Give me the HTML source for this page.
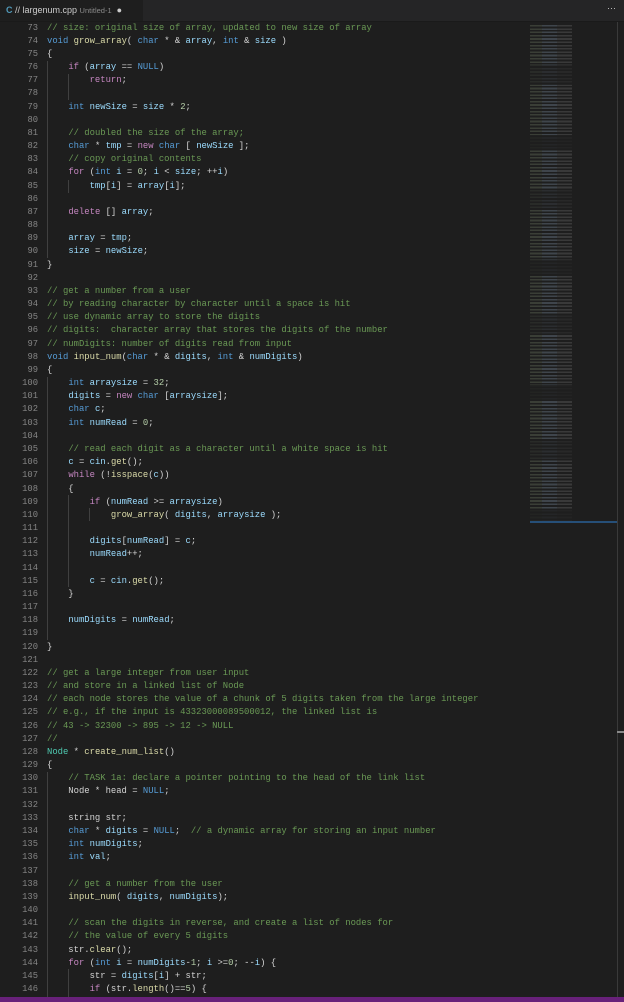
<!DOCTYPE html>
<html><head><meta charset="utf-8"><style>
*{margin:0;padding:0}
body{width:624px;height:1002px;background:#1e1e1e;overflow:hidden;position:relative;font-family:"Liberation Sans",sans-serif}
.title{position:absolute;left:0;top:0;width:624px;height:21px;background:#252526;border-bottom:1px solid #1a1a1a}
.tab{position:absolute;left:0;top:0;height:21px;width:143px;background:#1e1e1e;color:#ccc;font-size:9px;line-height:21px;padding-left:6px;box-sizing:border-box}
.tab .ic{color:#519aba;font-weight:bold}
.tab .u{color:#8a8a8a;font-size:7.5px}
.dots{position:absolute;right:8px;top:3px;color:#ccc;font-size:9px}
.nums{position:absolute;left:0;top:21.5px;width:38px;text-align:right;color:#858585;font-family:"Liberation Mono",monospace;font-size:8.8px;line-height:13.17px;white-space:pre}
pre{position:absolute;left:47px;top:21.5px;color:#d4d4d4;font-family:"Liberation Mono",monospace;font-size:8.88px;line-height:13.17px;letter-spacing:0}
.c{color:#6a9955}.k{color:#569cd6}.p{color:#c586c0}.f{color:#dcdcaa}.v{color:#9cdcfe}.n{color:#b5cea8}.t{color:#4ec9b0}
.status{position:absolute;left:0;bottom:0;width:624px;height:5px;background:#68217a}
.mm{position:absolute;left:530px;top:25px;width:60px;height:497px;opacity:.3;
background:
repeating-linear-gradient(180deg,transparent 0 1.6px,#1e1e1e 1.6px 3.3px),
linear-gradient(90deg,#7a8a70 0 20%,#8ca0b8 20% 45%,#777 45% 70%,transparent 70%);
-webkit-mask:repeating-linear-gradient(180deg,#000 0 40px,rgba(0,0,0,.4) 40px 60px,#000 60px 110px,rgba(0,0,0,.2) 110px 125px)}
.mmhl{position:absolute;left:530px;top:521px;width:87px;height:2px;background:#264f78}
.sb{position:absolute;left:617px;top:22px;width:1px;height:975px;background:#3a3a3a}
.sbm{position:absolute;left:617px;top:731px;width:7px;height:2px;background:#888}
.g{position:absolute;width:1px;background:#404040}
</style></head><body>
<div class="title"><div class="tab"><span class="ic">C</span> // largenum.cpp <span class="u">Untitled-1</span> &nbsp;<span style="color:#ccc">●</span></div><div class="dots">···</div></div>
<div class="g" style="left:47px;top:61px;height:197px"></div>
<div class="g" style="left:68px;top:74px;height:26px"></div>
<div class="g" style="left:68px;top:180px;height:13px"></div>
<div class="g" style="left:47px;top:377px;height:263px"></div>
<div class="g" style="left:68px;top:495px;height:92px"></div>
<div class="g" style="left:89px;top:508px;height:13px"></div>
<div class="g" style="left:47px;top:772px;height:225px"></div>
<div class="g" style="left:68px;top:969px;height:28px"></div>
<div class="nums">73
74
75
76
77
78
79
80
81
82
83
84
85
86
87
88
89
90
91
92
93
94
95
96
97
98
99
100
101
102
103
104
105
106
107
108
109
110
111
112
113
114
115
116
117
118
119
120
121
122
123
124
125
126
127
128
129
130
131
132
133
134
135
136
137
138
139
140
141
142
143
144
145
146</div>
<pre><span class="c">// size: original size of array, updated to new size of array</span>
<span class="k">void</span> <span class="f">grow_array</span>( <span class="k">char</span> * &amp; <span class="v">array</span>, <span class="k">int</span> &amp; <span class="v">size</span> )
{
    <span class="p">if</span> (<span class="v">array</span> == <span class="k">NULL</span>)
        <span class="p">return</span>;

    <span class="k">int</span> <span class="v">newSize</span> = <span class="v">size</span> * <span class="n">2</span>;

    <span class="c">// doubled the size of the array;</span>
    <span class="k">char</span> * <span class="v">tmp</span> = <span class="p">new</span> <span class="k">char</span> [ <span class="v">newSize</span> ];
    <span class="c">// copy original contents</span>
    <span class="p">for</span> (<span class="k">int</span> <span class="v">i</span> = <span class="n">0</span>; <span class="v">i</span> &lt; <span class="v">size</span>; ++<span class="v">i</span>)
        <span class="v">tmp</span>[<span class="v">i</span>] = <span class="v">array</span>[<span class="v">i</span>];

    <span class="p">delete</span> [] <span class="v">array</span>;

    <span class="v">array</span> = <span class="v">tmp</span>;
    <span class="v">size</span> = <span class="v">newSize</span>;
}

<span class="c">// get a number from a user</span>
<span class="c">// by reading character by character until a space is hit</span>
<span class="c">// use dynamic array to store the digits</span>
<span class="c">// digits:  character array that stores the digits of the number</span>
<span class="c">// numDigits: number of digits read from input</span>
<span class="k">void</span> <span class="f">input_num</span>(<span class="k">char</span> * &amp; <span class="v">digits</span>, <span class="k">int</span> &amp; <span class="v">numDigits</span>)
{
    <span class="k">int</span> <span class="v">arraysize</span> = <span class="n">32</span>;
    <span class="v">digits</span> = <span class="p">new</span> <span class="k">char</span> [<span class="v">arraysize</span>];
    <span class="k">char</span> <span class="v">c</span>;
    <span class="k">int</span> <span class="v">numRead</span> = <span class="n">0</span>;

    <span class="c">// read each digit as a character until a white space is hit</span>
    <span class="v">c</span> = <span class="v">cin</span>.<span class="f">get</span>();
    <span class="p">while</span> (!<span class="f">isspace</span>(<span class="v">c</span>))
    {
        <span class="p">if</span> (<span class="v">numRead</span> &gt;= <span class="v">arraysize</span>)
            <span class="f">grow_array</span>( <span class="v">digits</span>, <span class="v">arraysize</span> );

        <span class="v">digits</span>[<span class="v">numRead</span>] = <span class="v">c</span>;
        <span class="v">numRead</span>++;

        <span class="v">c</span> = <span class="v">cin</span>.<span class="f">get</span>();
    }

    <span class="v">numDigits</span> = <span class="v">numRead</span>;

}

<span class="c">// get a large integer from user input</span>
<span class="c">// and store in a linked list of Node</span>
<span class="c">// each node stores the value of a chunk of 5 digits taken from the large integer</span>
<span class="c">// e.g., if the input is 43323000089500012, the linked list is</span>
<span class="c">// 43 -&gt; 32300 -&gt; 895 -&gt; 12 -&gt; NULL</span>
<span class="c">//</span>
<span class="t">Node</span> * <span class="f">create_num_list</span>()
{
    <span class="c">// TASK 1a: declare a pointer pointing to the head of the link list</span>
    Node * head = <span class="k">NULL</span>;

    string str;
    <span class="k">char</span> * <span class="v">digits</span> = <span class="k">NULL</span>;  <span class="c">// a dynamic array for storing an input number</span>
    <span class="k">int</span> <span class="v">numDigits</span>;
    <span class="k">int</span> <span class="v">val</span>;

    <span class="c">// get a number from the user</span>
    <span class="f">input_num</span>( <span class="v">digits</span>, <span class="v">numDigits</span>);

    <span class="c">// scan the digits in reverse, and create a list of nodes for</span>
    <span class="c">// the value of every 5 digits</span>
    str.<span class="f">clear</span>();
    <span class="p">for</span> (<span class="k">int</span> <span class="v">i</span> = <span class="v">numDigits</span>-<span class="n">1</span>; <span class="v">i</span> &gt;=<span class="n">0</span>; --<span class="v">i</span>) {
        str = <span class="v">digits</span>[<span class="v">i</span>] + str;
        <span class="p">if</span> (str.<span class="f">length</span>()==<span class="n">5</span>) {</pre>
<div class="mm"></div>
<div class="mmhl"></div>
<div class="sb"></div>
<div class="sbm"></div>
<div class="status"></div>
</body></html>
